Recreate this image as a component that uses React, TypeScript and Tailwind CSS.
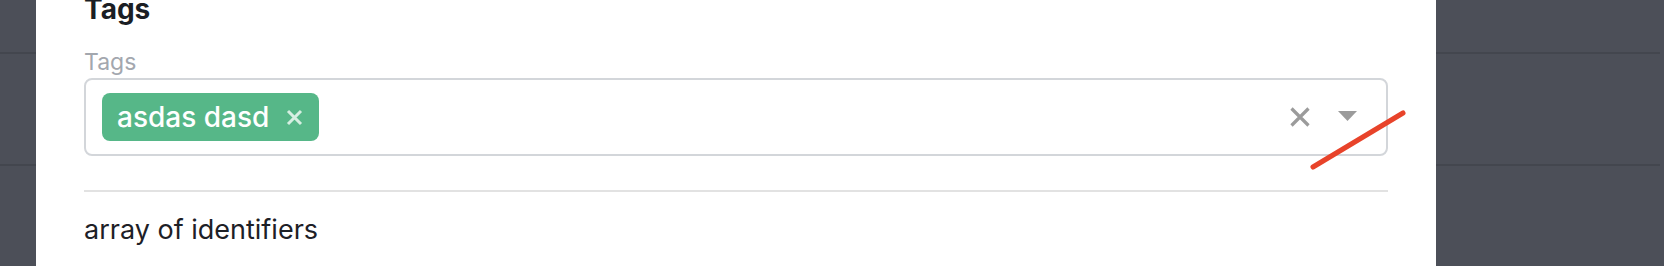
import React from "react";

function SideStrip({ className }: { className: string }) {
  return (
    <div className={className}>
      <div className="h-[54px] border-b-2 border-[#43464e]" />
      <div className="h-[112px] border-b-2 border-[#43464e]" />
    </div>
  );
}

export default function App() {
  return (
    <div
      className="relative flex h-[266px] w-[1664px] overflow-hidden bg-[#4c4f58]"
      style={{ fontFamily: "Inter, 'Noto Sans', sans-serif" }}
    >
      <SideStrip className="w-[36px] shrink-0" />
      <div className="flex w-[1400px] shrink-0 flex-col bg-white px-[48px]">
        <h2 className="mt-[-9px] text-[28px] font-bold leading-[36px] text-[#1b1e24]">Tags</h2>
        <label className="mt-[20px] text-[23px] leading-[31px] text-[#a3a7ae]">Tags</label>
        <div className="flex h-[78px] items-center rounded-[8px] border-2 border-[#d3d6da] pl-[16px] pr-[29px]">
          <span className="flex h-[48px] items-center gap-[17px] rounded-[8px] bg-[#56b788] pl-[15px] pr-[16px] text-[28px] font-medium leading-none text-white">
            asdas dasd
            <svg width="17" height="17" viewBox="0 0 17 17" className="mt-[1px]">
              <path d="M2 2 L15 15 M15 2 L2 15" stroke="#d6efe2" strokeWidth="3" strokeLinecap="butt" />
            </svg>
          </span>
          <div className="flex-1" />
          <svg width="20" height="20" viewBox="0 0 20 20">
            <path d="M1.5 1.5 L18.5 18.5 M18.5 1.5 L1.5 18.5" stroke="#9b9b9b" strokeWidth="3.2" />
          </svg>
          <svg width="19" height="10" viewBox="0 0 19 10" className="ml-[28px] mt-[-2px]">
            <path d="M0 0 H19 L9.5 10 Z" fill="#9b9b9b" />
          </svg>
        </div>
        <div className="mt-[34px] h-[2px] bg-[#e2e2e2]" />
        <p className="mt-[18px] text-[27px] leading-[40px] text-[#1d2026]">array of identifiers</p>
      </div>
      <SideStrip className="flex-1 pr-[4px]" />
      <svg
        className="pointer-events-none absolute left-0 top-0"
        width="1664"
        height="266"
        viewBox="0 0 1664 266"
      >
        <line x1="1313" y1="167" x2="1403" y2="113" stroke="#e8432a" strokeWidth="5" strokeLinecap="round" />
      </svg>
    </div>
  );
}
